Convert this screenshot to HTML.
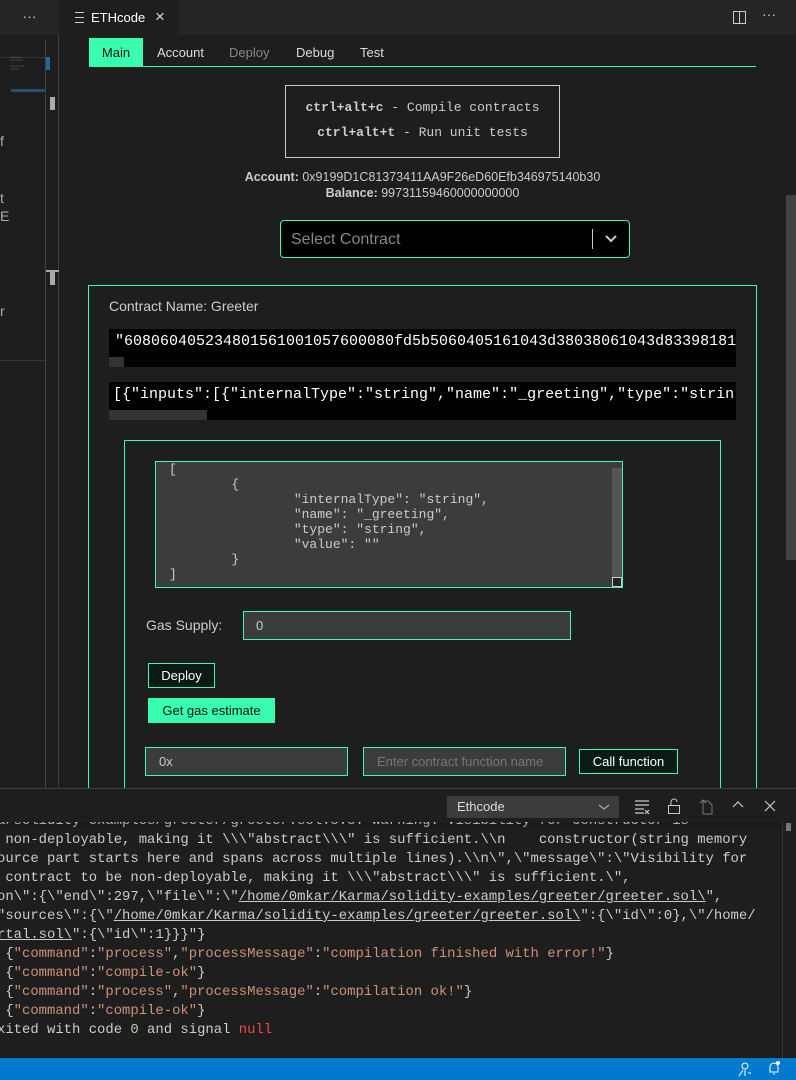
<!DOCTYPE html>
<html><head><meta charset="utf-8"><style>
*{box-sizing:border-box;margin:0;padding:0}
body{width:796px;height:1080px;background:#1e1e1e;font-family:"Liberation Sans",sans-serif;color:#ccc;position:relative;overflow:hidden}
.a{position:absolute}
.mono{font-family:"Liberation Mono","DejaVu Sans Mono",monospace}
.out div{height:19px;white-space:pre;line-height:19px}
.s{color:#ce9178}.u{text-decoration:underline}
</style></head><body>
<div class="a" style="left:0;top:0;width:59px;height:788px;background:#1e1e1e;border-right:1px solid #3c3c3c"></div>
<div class="a" style="left:0;top:0;width:59px;height:35px;background:#252526;text-align:center;line-height:32px;color:#ccc;font-size:14px">···</div>
<div class="a" style="left:0;top:57px;width:45px;height:1px;background:#333"></div>
<div class="a" style="left:10px;top:57px;width:35px;height:34px;color:#888;font-size:2px;line-height:3px">≡≡≡≡≡≡≡≡≡≡<br>≡≡≡≡≡≡≡≡≡≡≡<br><br>≡≡≡≡≡≡≡≡≡≡≡≡<br>≡≡≡≡≡≡≡≡</div>
<div class="a" style="left:11px;top:89px;width:34px;height:3px;background:#264f78"></div>
<div class="a" style="left:46px;top:57px;width:4px;height:13px;background:#1f6f8b"></div>
<div class="a" style="left:45px;top:40px;width:1px;height:748px;background:#444"></div>
<div class="a" style="left:50px;top:97px;width:5px;height:13px;background:#aaa"></div>
<div class="a" style="left:46px;top:270px;width:13px;height:2px;background:#aaa"></div>
<div class="a" style="left:50px;top:270px;width:5px;height:15px;background:#aaa"></div>
<div class="a" style="left:0;top:133px;font-size:14px;color:#aaa">f</div>
<div class="a" style="left:0;top:190px;font-size:14px;color:#aaa">t</div>
<div class="a" style="left:0;top:208px;font-size:14px;color:#aaa">E</div>
<div class="a" style="left:0;top:303px;font-size:14px;color:#aaa">r</div>
<div class="a" style="left:0;top:360px;width:45px;height:1px;background:#333"></div>
<div class="a" style="left:60px;top:0;width:736px;height:35px;background:#252526"></div>
<div class="a" style="left:60px;top:0;width:118px;height:35px;background:#1e1e1e;font-size:13px;color:#fff;line-height:35px;padding-left:31px">ETHcode</div>
<div class="a" style="left:75px;top:12px;width:9px;height:11px;border-top:1px solid #ccc;border-bottom:1px solid #ccc"><div style="margin-top:4px;height:1px;background:#ccc;width:9px"></div></div>
<div class="a" style="left:155px;top:7px;font-size:17px;color:#ddd">×</div>
<div class="a" style="left:733px;top:11px;width:13px;height:13px;border:1px solid #ccc"><div style="margin-left:5px;width:1px;height:11px;background:#ccc"></div></div>
<div class="a" style="left:762px;top:6px;font-size:14px;color:#ccc">···</div>
<div class="a" style="left:89px;top:38px;width:54px;height:29px;background:#38ffb0;color:#111;font-size:13px;text-align:center;line-height:29px">Main</div>
<div class="a" style="left:157px;top:45px;font-size:13px;color:#ddd">Account</div>
<div class="a" style="left:229px;top:45px;font-size:13px;color:#888">Deploy</div>
<div class="a" style="left:296px;top:45px;font-size:13px;color:#ddd">Debug</div>
<div class="a" style="left:360px;top:45px;font-size:13px;color:#ddd">Test</div>
<div class="a" style="left:89px;top:66px;width:667px;height:1px;background:#38ffb0"></div>
<div class="a" style="left:285px;top:85px;width:275px;height:73px;border:1px solid #ccc;font-size:13px;text-align:center">
<div style="margin-top:14px" class="mono"><b>ctrl+alt+c</b> - Compile contracts</div>
<div style="margin-top:10px" class="mono"><b>ctrl+alt+t</b> - Run unit tests</div></div>
<div class="a" style="left:0;width:845px;top:169px;text-align:center;font-size:12.5px;line-height:16px;color:#ccc"><b>Account:</b> 0x9199D1C81373411AA9F26eD60Efb346975140b30<br><b>Balance:</b> 99731159460000000000</div>
<div class="a" style="left:280px;top:220px;width:350px;height:38px;background:#000;border:1px solid #38ffb0;border-radius:4px;font-size:16px;color:#888;padding:10px 10px">Select Contract</div>
<div class="a" style="left:592px;top:229px;width:1px;height:20px;background:#ccc"></div>
<svg class="a" style="left:603px;top:232px" width="16" height="14"><path d="M3 4l5 5 5-5" stroke="#ccc" stroke-width="2" fill="none"/></svg>
<div class="a" style="left:88px;top:285px;width:669px;height:520px;border:1px solid #38ffb0"></div>
<div class="a" style="left:109px;top:298px;font-size:14px;color:#ccc">Contract Name: Greeter</div>
<div class="a mono" style="left:109px;top:329px;width:627px;height:38px;background:#000;color:#fff;font-size:15px;padding:4px 6px;white-space:nowrap;overflow:hidden">"608060405234801561001057600080fd5b5060405161043d38038061043d83398181</div>
<div class="a" style="left:109px;top:357px;width:15px;height:10px;background:#333"></div>
<div class="a mono" style="left:109px;top:382px;width:627px;height:38px;background:#000;color:#fff;font-size:15px;padding:4px 4px;white-space:nowrap;overflow:hidden">[{"inputs":[{"internalType":"string","name":"_greeting","type":"strin</div>
<div class="a" style="left:109px;top:410px;width:98px;height:10px;background:#333"></div>
<div class="a" style="left:124px;top:440px;width:597px;height:360px;border:1px solid #38ffb0"></div>
<div class="a mono" style="left:155px;top:461px;width:468px;height:127px;background:#3c3c3c;border:1px solid #38ffb0;font-size:13px;color:#ccc;line-height:15px;white-space:pre;padding:0 0 0 13px">[
        {
                "internalType": "string",
                "name": "_greeting",
                "type": "string",
                "value": ""
        }
]</div>
<div class="a" style="left:612px;top:468px;width:10px;height:109px;background:#555"></div>
<div class="a" style="left:612px;top:577px;width:10px;height:10px;background:#222;border:1px solid #ccc"></div>
<div class="a" style="left:146px;top:617px;font-size:14px;color:#ccc">Gas Supply:</div>
<div class="a" style="left:243px;top:611px;width:328px;height:29px;background:#3c3c3c;border:1px solid #38ffb0;font-size:13px;color:#ccc;padding:6px 12px">0</div>
<div class="a" style="left:148px;top:663px;width:67px;height:25px;background:#0a1a14;border:1px solid #38ffb0;font-size:13px;color:#fff;text-align:center;line-height:23px">Deploy</div>
<div class="a" style="left:148px;top:698px;width:127px;height:25px;background:#38ffb0;font-size:13px;color:#111;text-align:center;line-height:25px">Get gas estimate</div>
<div class="a" style="left:145px;top:747px;width:203px;height:29px;background:#3c3c3c;border:1px solid #38ffb0;font-size:13px;color:#ccc;padding:6px 13px">0x</div>
<div class="a" style="left:363px;top:747px;width:203px;height:29px;background:#3c3c3c;border:1px solid #38ffb0;font-size:13px;color:#777;padding:6px 13px">Enter contract function name</div>
<div class="a" style="left:579px;top:749px;width:99px;height:25px;background:#0a1a14;border:1px solid #38ffb0;font-size:13px;color:#fff;text-align:center;line-height:23px">Call function</div>
<div class="a" style="left:786px;top:195px;width:10px;height:365px;background:#424242"></div>
<div class="a" style="left:0;top:788px;width:796px;height:270px;background:#1e1e1e;border-top:1px solid #3c3c3c"></div>
<div class="a" style="left:447px;top:796px;width:172px;height:22px;background:#3c3c3c;font-size:13px;color:#ddd;padding:3px 10px">Ethcode</div>
<svg class="a" style="left:598px;top:802px" width="12" height="10"><path d="M1 3l5 4 5-4" stroke="#aaa" stroke-width="1.2" fill="none"/></svg>
<svg class="a" style="left:634px;top:798px" width="18" height="18"><path d="M1 3h14M1 7h14M1 11h9M1 15h9M11 12l4 4M15 12l-4 4" stroke="#ccc" stroke-width="1.2" fill="none"/></svg>
<svg class="a" style="left:667px;top:797px" width="14" height="18"><rect x="1.5" y="8.5" width="11" height="8" stroke="#ccc" fill="none"/><path d="M4 8V5a3 3 0 0 1 6 0" stroke="#ccc" fill="none"/></svg>
<svg class="a" style="left:699px;top:797px" width="16" height="18"><path d="M4 4h5l4 4v9H4z" stroke="#777" fill="none"/><path d="M1 6l3-3 3 3" stroke="#777" fill="none"/></svg>
<svg class="a" style="left:732px;top:800px" width="12" height="10"><path d="M1 7l5-5 5 5" stroke="#ccc" stroke-width="1.2" fill="none"/></svg>
<svg class="a" style="left:764px;top:800px" width="12" height="12"><path d="M1 1l10 10M11 1L1 11" stroke="#ccc" stroke-width="1.2"/></svg>
<div class="a" style="left:782px;top:822px;width:1px;height:236px;background:#333"></div>
<div class="a" style="left:786px;top:823px;width:5px;height:8px;background:#777"></div>
<div class="a" style="left:0;top:822px;width:782px;height:236px;overflow:hidden">
<div class="a mono out" style="left:-3px;top:-10px;width:790px;font-size:13.9px;color:#ccc">
<div>a/solidity-examples/greeter/greeter.sol:5:5: Warning: Visibility for constructor is</div>
<div> non-deployable, making it \\\"abstract\\\" is sufficient.\\n    constructor(string memory</div>
<div>ource part starts here and spans across multiple lines).\\n\",\"message\":\"Visibility for</div>
<div> contract to be non-deployable, making it \\\"abstract\\\" is sufficient.\",</div>
<div>on\":{\"end\":297,\"file\":\"<span class="u">/home/0mkar/Karma/solidity-examples/greeter/greeter.sol\</span>",</div>
<div>"sources\":{\"<span class="u">/home/0mkar/Karma/solidity-examples/greeter/greeter.sol\</span>":{\"id\":0},\"/home/</div>
<div><span class="u">rtal.sol\</span>":{\"id\":1}}}"}</div>
<div> {<span class="s">"command"</span>:<span class="s">"process"</span>,<span class="s">"processMessage"</span>:<span class="s">"compilation finished with error!"</span>}</div>
<div> {<span class="s">"command"</span>:<span class="s">"compile-ok"</span>}</div>
<div> {<span class="s">"command"</span>:<span class="s">"process"</span>,<span class="s">"processMessage"</span>:<span class="s">"compilation ok!"</span>}</div>
<div> {<span class="s">"command"</span>:<span class="s">"compile-ok"</span>}</div>
<div>xited with code <span style="color:#b5cea8">0</span> and signal <span style="color:#f44747">null</span></div>
</div>
<div class="a" style="left:0;top:0;width:782px;height:1px;box-shadow:0 2px 5px #000"></div>
</div>
<div class="a" style="left:0;top:1058px;width:796px;height:22px;background:#007acc"></div>
<svg class="a" style="left:737px;top:1061px" width="14" height="16"><circle cx="8" cy="5" r="3" stroke="#fff" fill="none"/><path d="M2 15l4-6M8 9v6M11 12h3" stroke="#fff" fill="none"/></svg>
<svg class="a" style="left:767px;top:1060px" width="14" height="16"><path d="M3 12V7a4 4 0 0 1 8 0v5zM6 14h2" stroke="#fff" fill="none"/><circle cx="11" cy="3" r="2" fill="#fff"/></svg>
</body></html>
